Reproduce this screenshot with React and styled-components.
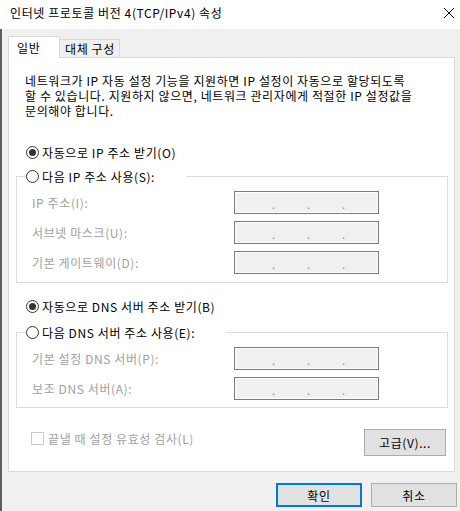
import React from 'react';
import styled, { createGlobalStyle } from 'styled-components';

const GlobalStyle = createGlobalStyle`
  html, body {
    margin: 0;
    padding: 0;
    background: #f0f0f0;
  }
  body {
    font-family: 'Noto Sans CJK KR', 'Noto Sans', sans-serif;
    font-size: 12px;
    letter-spacing: 0.6px;
    color: #000;
  }
`;

const Window = styled.div`
  width: 460px;
  height: 511px;
  background: #f0f0f0;
  overflow: hidden;
`;

const TitleBar = styled.div`
  height: 29px;
  box-sizing: border-box;
  background: #fff;
  display: flex;
  justify-content: space-between;
  align-items: flex-start;
  padding: 4px 5px 0 10px;
  line-height: 18px;
  white-space: nowrap;
`;

const CloseIcon = styled.svg`
  width: 12px;
  height: 12px;
  margin-top: 3px;
`;

const Body = styled.div`
  height: 482px;
  box-sizing: border-box;
  border-left: 2px solid #5e5e5e;
  padding: 7px 0 0 6px;
`;

const TabRow = styled.div`
  display: flex;
  align-items: flex-end;
  height: 21px;
`;

const Tab = styled.div`
  box-sizing: border-box;
  display: flex;
  align-items: center;
  white-space: nowrap;
  border: 1px solid #d9d9d9;
  ${(p) =>
    p.$active
      ? `
    width: 52px;
    height: 22px;
    padding-left: 8px;
    background: #fff;
    border-bottom: none;
    margin-bottom: -1px;
    position: relative;
    z-index: 1;
  `
      : `
    width: 60px;
    height: 18px;
    padding-left: 5px;
    background: #f0f0f0;
    border-left: none;
    border-bottom: none;
  `}
`;

const Panel = styled.div`
  width: 447px;
  height: 415px;
  box-sizing: border-box;
  border: 1px solid #d9d9d9;
  background: #fff;
  position: relative;
  display: flex;
  flex-direction: column;
`;

const Desc = styled.p`
  margin: 15px 0 0 16px;
  line-height: 15px;
  white-space: nowrap;
`;

const RadioRow = styled.label`
  display: flex;
  align-items: center;
  gap: 3px;
  height: 18px;
  margin-top: ${(p) => p.$top}px;
  padding-left: 17px;
  white-space: nowrap;
`;

const RadioCircle = styled.span`
  width: 13px;
  height: 13px;
  box-sizing: border-box;
  border-radius: 50%;
  border: 1px solid #333;
  background: #fff;
  display: flex;
  align-items: center;
  justify-content: center;
  flex-shrink: 0;
  &::after {
    content: '';
    width: 7px;
    height: 7px;
    border-radius: 50%;
    background: ${(p) => (p.$checked ? '#333' : 'transparent')};
  }
`;

const Group = styled.fieldset`
  margin: ${(p) => p.$top}px 6px 0 7px;
  padding: 0;
  border: 1px solid #dcdcdc;
  min-width: 0;
`;

const Legend = styled.legend`
  margin-left: 9px;
  padding: 0 31px 0 0;
  display: flex;
  align-items: center;
  gap: 3px;
  height: 18px;
  white-space: nowrap;
`;

const FieldGrid = styled.div`
  display: grid;
  grid-template-columns: 202px 145px;
  grid-auto-rows: 23px;
  row-gap: 7px;
  align-items: center;
  padding: 6px 0 ${(p) => p.$bottom}px 15px;
`;

const FieldLabel = styled.span`
  color: #a0a0a0;
  white-space: nowrap;
`;

const IpBox = styled.div`
  height: 23px;
  box-sizing: border-box;
  border: 1px solid #7a7a7a;
  box-shadow: inset 0 0 0 1px #fff;
  background: #f0f0f0;
  display: flex;
  align-items: flex-end;
  gap: 32px;
  padding: 0 0 2px 37px;
  color: #8a8a8a;
  font-size: 11px;
  line-height: 14px;
  letter-spacing: 0;
`;

const Dot = styled.span`
  width: 3px;
`;

const BottomRow = styled.div`
  display: flex;
  justify-content: space-between;
  align-items: flex-start;
  margin-top: 21px;
  padding: 0 8px 0 22px;
`;

const CheckLabel = styled.label`
  display: flex;
  align-items: center;
  gap: 4px;
  margin-top: 3px;
  color: #a0a0a0;
  white-space: nowrap;
  line-height: 13px;
`;

const CheckBox = styled.span`
  width: 13px;
  height: 13px;
  box-sizing: border-box;
  border: 1px solid #cccccc;
  background: #fff;
`;

const Button = styled.button`
  font: inherit;
  letter-spacing: inherit;
  color: #000;
  width: ${(p) => p.$w}px;
  height: ${(p) => p.$h}px;
  box-sizing: border-box;
  background: #e1e1e1;
  border: ${(p) => (p.$default ? '2px solid #0078d7' : '1px solid #adadad')};
  padding: 0;
  display: flex;
  align-items: center;
  justify-content: center;
  white-space: nowrap;
  cursor: default;
`;

const Footer = styled.div`
  display: flex;
  justify-content: flex-end;
  gap: 9px;
  margin-top: 11px;
  padding-right: 3px;
`;

const IpField = () => (
  <IpBox>
    <Dot>.</Dot>
    <Dot>.</Dot>
    <Dot>.</Dot>
  </IpBox>
);

export default function App() {
  return (
    <Window>
      <GlobalStyle />
      <TitleBar>
        <span>인터넷 프로토콜 버전 4(TCP/IPv4) 속성</span>
        <CloseIcon viewBox="0 0 12 12">
          <path d="M1 1L11 11M11 1L1 11" stroke="#111" strokeWidth="1" fill="none" />
        </CloseIcon>
      </TitleBar>
      <Body>
        <TabRow>
          <Tab $active>일반</Tab>
          <Tab>대체 구성</Tab>
        </TabRow>
        <Panel>
          <Desc>
            네트워크가 IP 자동 설정 기능을 지원하면 IP 설정이 자동으로 할당되도록
            <br />
            할 수 있습니다. 지원하지 않으면, 네트워크 관리자에게 적절한 IP 설정값을
            <br />
            문의해야 합니다.
          </Desc>

          <RadioRow $top={25}>
            <RadioCircle $checked />
            자동으로 IP 주소 받기(O)
          </RadioRow>
          <Group $top={6}>
            <Legend>
              <RadioCircle />
              다음 IP 주소 사용(S):
            </Legend>
            <FieldGrid $bottom={8}>
              <FieldLabel>IP 주소(I):</FieldLabel>
              <IpField />
              <FieldLabel>서브넷 마스크(U):</FieldLabel>
              <IpField />
              <FieldLabel>기본 게이트웨이(D):</FieldLabel>
              <IpField />
            </FieldGrid>
          </Group>

          <RadioRow $top={14}>
            <RadioCircle $checked />
            자동으로 DNS 서버 주소 받기(B)
          </RadioRow>
          <Group $top={8}>
            <Legend>
              <RadioCircle />
              다음 DNS 서버 주소 사용(E):
            </Legend>
            <FieldGrid $bottom={7}>
              <FieldLabel>기본 설정 DNS 서버(P):</FieldLabel>
              <IpField />
              <FieldLabel>보조 DNS 서버(A):</FieldLabel>
              <IpField />
            </FieldGrid>
          </Group>

          <BottomRow>
            <CheckLabel>
              <CheckBox />
              끝낼 때 설정 유효성 검사(L)
            </CheckLabel>
            <Button $w={82} $h={27}>고급(V)...</Button>
          </BottomRow>
        </Panel>
        <Footer>
          <Button $w={86} $h={24} $default>확인</Button>
          <Button $w={86} $h={24}>취소</Button>
        </Footer>
      </Body>
    </Window>
  );
}
